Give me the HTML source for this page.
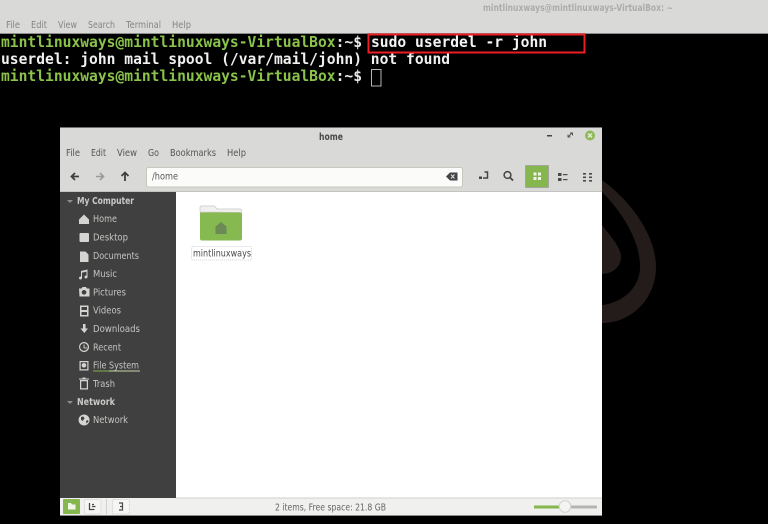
<!DOCTYPE html>
<html><head><meta charset="utf-8"><style>
html,body{margin:0;padding:0;background:#000;width:768px;height:524px;overflow:hidden}
svg{display:block;filter:blur(.3px)}
.t{font-family:"DejaVu Sans Mono","Liberation Mono",monospace;font-weight:bold;font-size:14.63px}
.u{font-family:"DejaVu Sans","Liberation Sans",sans-serif;font-size:9.5px}
.m{fill:#858583}.n{fill:#555553}.s{fill:#c4c4c2}.h{fill:#c9c9c7;font-weight:bold}
</style></head><body>
<svg width="768" height="524" viewBox="0 0 768 524" xmlns="http://www.w3.org/2000/svg">
<rect width="768" height="524" fill="#000"/>
<path d="M602 180C630 200 656 235 656 267C656 300 630 323 602 323V305C622 303 640 288 640 267C640 240 622 212 602 192Z" fill="#231c1a"/>
<path d="M602 225C612 238 621 248 621 257C621 267 612 274 602 274Z" fill="#231c1a"/>
<rect width="768" height="33" fill="#d9d9d7"/><rect y="33" width="768" height="1" fill="#8d8d8b"/>
<text class="u" x="483" y="11" textLength="190" lengthAdjust="spacingAndGlyphs" fill="#acacaa" font-weight="bold">mintlinuxways@mintlinuxways-VirtualBox: ~</text>
<g class="u m">
<text x="6" y="28" textLength="14" lengthAdjust="spacingAndGlyphs">File</text>
<text x="31" y="28" textLength="16" lengthAdjust="spacingAndGlyphs">Edit</text>
<text x="58" y="28" textLength="19" lengthAdjust="spacingAndGlyphs">View</text>
<text x="88" y="28" textLength="27" lengthAdjust="spacingAndGlyphs">Search</text>
<text x="126" y="28" textLength="35" lengthAdjust="spacingAndGlyphs">Terminal</text>
<text x="172" y="28" textLength="19" lengthAdjust="spacingAndGlyphs">Help</text>
</g>
<g class="t">
<text x="1" y="47" fill="#8ac24a">mintlinuxways@mintlinuxways-VirtualBox<tspan fill="#e8e8e8">:~$</tspan></text>
<text x="1" y="64" fill="#f0f0f0">userdel: john mail spool (/var/mail/john) not found</text>
<text x="1" y="81" fill="#8ac24a">mintlinuxways@mintlinuxways-VirtualBox<tspan fill="#e8e8e8">:~$</tspan></text>
<text x="371" y="47" fill="#f4f4f4">sudo userdel -r john</text>
</g>
<rect x="368.5" y="34.5" width="216" height="18" fill="none" stroke="#ee1c25" stroke-width="2"/>
<rect x="371.5" y="69.5" width="9.5" height="16.5" fill="none" stroke="#b5b5b5"/>

<rect x="60" y="127" width="542" height="389" fill="#d9d9d7"/>
<rect x="60" y="127" width="542" height="1" fill="#70706e"/>
<text class="u" x="319" y="140" textLength="24" lengthAdjust="spacingAndGlyphs" fill="#4a4a48" font-weight="bold">home</text>
<rect x="547" y="135" width="5" height="1.5" fill="#444"/>
<path d="M568 137l4-4M570 133h2.500v2.500M568 134.500v2.500h2.500" stroke="#555" stroke-width="1" fill="none"/>
<circle cx="590" cy="135.500" r="5" fill="#8cba58"/><path d="M588 133.500l4 4M592 133.500l-4 4" stroke="#e4ecd8" stroke-width="1.500"/>
<g class="u n">
<text x="66" y="156" textLength="14" lengthAdjust="spacingAndGlyphs">File</text>
<text x="91" y="156" textLength="15" lengthAdjust="spacingAndGlyphs">Edit</text>
<text x="117" y="156" textLength="20" lengthAdjust="spacingAndGlyphs">View</text>
<text x="148" y="156" textLength="11" lengthAdjust="spacingAndGlyphs">Go</text>
<text x="170" y="156" textLength="46" lengthAdjust="spacingAndGlyphs">Bookmarks</text>
<text x="227" y="156" textLength="19" lengthAdjust="spacingAndGlyphs">Help</text>
</g>
<path d="M79 176.500h-7M75 173l-3.500 3.500 3.500 3.500" stroke="#3f3f3f" stroke-width="1.800" fill="none"/>
<path d="M96 176.500h7M100 173l3.500 3.500-3.500 3.500" stroke="#9a9a98" stroke-width="1.600" fill="none"/>
<path d="M125 181v-8M121.500 176l3.500-3.500 3.500 3.500" stroke="#3f3f3f" stroke-width="1.800" fill="none"/>
<rect x="146.500" y="167.500" width="316" height="19.500" rx="2" fill="#fbfbfa" stroke="#c4c8bd"/>
<text class="u" x="152" y="179.500" textLength="26" lengthAdjust="spacingAndGlyphs" fill="#555">/home</text>
<path d="M446 176.500l4-4h7.500v8h-7.500z" fill="#444"/><path d="M451 174.500l3.500 4M454.500 174.500l-3.500 4" stroke="#ddd" stroke-width="1"/>
<path d="M479 178h2M483 178h4.500v-6h-3" stroke="#444" stroke-width="1.500" fill="none"/><rect x="479" y="176.500" width="3" height="2.500" fill="#444"/>
<circle cx="507.500" cy="175" r="3.400" fill="none" stroke="#444" stroke-width="1.500"/><path d="M510 177.500l3 3" stroke="#444" stroke-width="1.800"/>
<rect x="525" y="165" width="24" height="23" rx="1" fill="#86b64e"/><rect x="525.500" y="165.500" width="23" height="22" rx="1" fill="none" stroke="#a3a79b"/>
<g fill="#f2f5ea"><rect x="533.500" y="172.500" width="3" height="3"/><rect x="538" y="172.500" width="3" height="3"/><rect x="533.500" y="177" width="3" height="3"/><rect x="538" y="177" width="3" height="3"/></g>
<g fill="#4a4a4a"><rect x="558" y="173" width="3.500" height="3"/><rect x="558" y="178" width="3.500" height="3"/><rect x="563" y="174" width="4.500" height="1.200"/><rect x="563" y="179" width="4.500" height="1.200"/>
<rect x="583" y="173" width="3" height="1.600"/><rect x="589" y="173" width="3" height="1.600"/><rect x="583" y="176.500" width="3" height="1.600"/><rect x="589" y="176.500" width="3" height="1.600"/><rect x="583" y="180" width="3" height="1.600"/><rect x="589" y="180" width="3" height="1.600"/></g>
<rect x="60" y="191" width="542" height="1" fill="#c4c4c2"/>

<rect x="60" y="192" width="116" height="306" fill="#404040"/>
<rect x="176" y="192" width="426" height="306" fill="#fff"/>
<path d="M67 200h6l-3 3z" fill="#8f8f8f"/>
<text class="u h" x="77" y="204" textLength="57" lengthAdjust="spacingAndGlyphs">My Computer</text>
<g class="u s">
<text x="93" y="222" textLength="24" lengthAdjust="spacingAndGlyphs">Home</text>
<text x="93" y="240.500" textLength="35" lengthAdjust="spacingAndGlyphs">Desktop</text>
<text x="93" y="259" textLength="46" lengthAdjust="spacingAndGlyphs">Documents</text>
<text x="93" y="277" textLength="24" lengthAdjust="spacingAndGlyphs">Music</text>
<text x="93" y="295.500" textLength="33" lengthAdjust="spacingAndGlyphs">Pictures</text>
<text x="93" y="313.500" textLength="28" lengthAdjust="spacingAndGlyphs">Videos</text>
<text x="93" y="332" textLength="47" lengthAdjust="spacingAndGlyphs">Downloads</text>
<text x="93" y="350.500" textLength="28" lengthAdjust="spacingAndGlyphs">Recent</text>
<text x="93" y="368.500" textLength="46" lengthAdjust="spacingAndGlyphs">File System</text>
<text x="93" y="387" textLength="22" lengthAdjust="spacingAndGlyphs">Trash</text>
<text x="93" y="423" textLength="35" lengthAdjust="spacingAndGlyphs">Network</text>
</g>
<rect x="93" y="370.500" width="47" height="1" fill="#c9d6a8"/><rect x="93" y="370.500" width="16" height="1" fill="#7fb04a"/>
<path d="M67 401h6l-3 3z" fill="#8f8f8f"/>
<text class="u h" x="77" y="405" textLength="38" lengthAdjust="spacingAndGlyphs">Network</text>
<g fill="#d4d4d2">
<path d="M79 219.500l5-5 5 5v4.500h-10z"/>
<rect x="79.500" y="233" width="9.500" height="9" rx="1"/>
<path d="M80 251.500h5.500l3 3v7.500h-8.500z"/>
<path d="M81 271l6.500-1.500v7.500a1.500 1.500 0 1 1-1-1.400v-4l-4.500 1v5.400a1.500 1.500 0 1 1-1-1.400z"/>
<path d="M79 288.500h2.500l1-1.500h3.500l1 1.500h2.500v8h-10zM84 290a2.300 2.300 0 1 0 .1 0z" fill-rule="evenodd"/>
<path d="M80 305.500h8.500v11h-8.500zM81.500 307v3h5.500v-3zM81.500 312v3h5.500v-3z" fill-rule="evenodd"/>
<path d="M83 324h2.500v4.500h2.500l-3.700 4.500-3.800-4.500h2.500z"/>
<path d="M84 342a5 5 0 1 0 .1 0zM84 343.200a3.800 3.800 0 1 1-.1 0zM83.600 344.500h.9v3h2.500v.9h-3.400z" fill-rule="evenodd"/>
<path d="M79.500 361h9v9.500h-9zM80.700 362.200v7.100h6.600v-7.100zM84 363a2.300 2.300 0 1 1-.1 0z" fill-rule="evenodd"/>
<path d="M80 380h8v9.500h-8zM81.200 381.200v7.100h5.600v-7.100zM79 378.500h10v1h-10zM82.500 377.500h3v1h-3z" fill-rule="evenodd"/>
<path d="M84 414.500a5.500 5.500 0 1 0 .1 0zM81 417l2.500-.5 1 2-2 2.500-1.500-1.500zM86 421l2-1 .5 1.500-2 2z" fill-rule="evenodd"/>
</g>

<path d="M200 212v-4.500a1.500 1.500 0 0 1 1.500-1.500h13l2.500 3h23a1.500 1.500 0 0 1 1.500 1.500v2z" fill="#f0f0ee" stroke="#c8c8c6" stroke-width=".7"/>
<path d="M200 212.500h40a2 2 0 0 1 2 2v24a2 2 0 0 1-2 2h-38a2 2 0 0 1-2-2z" fill="#86b94f"/>
<path d="M215.500 226.500l5.500-4.500 5.500 4.500v7.500h-11z" fill="#6b8a55"/>
<rect x="191.500" y="246.500" width="60" height="13.500" rx="1" fill="#fff" stroke="#d4d4d4" stroke-dasharray="1 1"/>
<text class="u" x="193" y="256.500" textLength="58" lengthAdjust="spacingAndGlyphs" fill="#4a4a4a">mintlinuxways</text>

<rect x="60" y="498" width="542" height="18" fill="#f0f0ef"/>
<rect x="176" y="497.500" width="426" height="1" fill="#cfcfcd"/>
<rect x="60" y="515" width="542" height="1" fill="#8a8a88"/>
<rect x="63" y="499" width="17" height="15" rx="1" fill="#86b64e"/>
<path d="M68 503h3l1 1.500h3.500v5h-7.500z" fill="#f2f5ea"/>
<rect x="84.500" y="499.500" width="16.500" height="14.500" rx="1" fill="#f5f5f4" stroke="#cdcdcb" stroke-dasharray="1 1"/>
<path d="M89.500 503v6.500h5M92 506.500h3.500M92 504.500h2" stroke="#4a4a4a" stroke-width="1.300" fill="none"/>
<rect x="106" y="499" width="1" height="15" fill="#d0d0ce"/>
<rect x="112.500" y="499.500" width="17" height="14.500" rx="1" fill="#f5f5f4" stroke="#cdcdcb" stroke-dasharray="1 1"/>
<path d="M119 503h3.500v7h-3.500M120 506.500h2.500" stroke="#4a4a4a" stroke-width="1.200" fill="none"/>
<text class="u" x="275" y="510.500" textLength="111" lengthAdjust="spacingAndGlyphs" fill="#666">2 items, Free space: 21.8 GB</text>
<rect x="534" y="505.500" width="26" height="3" fill="#86b64e"/>
<rect x="568" y="505.500" width="29" height="3" fill="#b4b4b2"/>
<circle cx="565" cy="506.500" r="5.800" fill="#f4f4f4" stroke="#d0d0ce"/>
</svg>
</body></html>
